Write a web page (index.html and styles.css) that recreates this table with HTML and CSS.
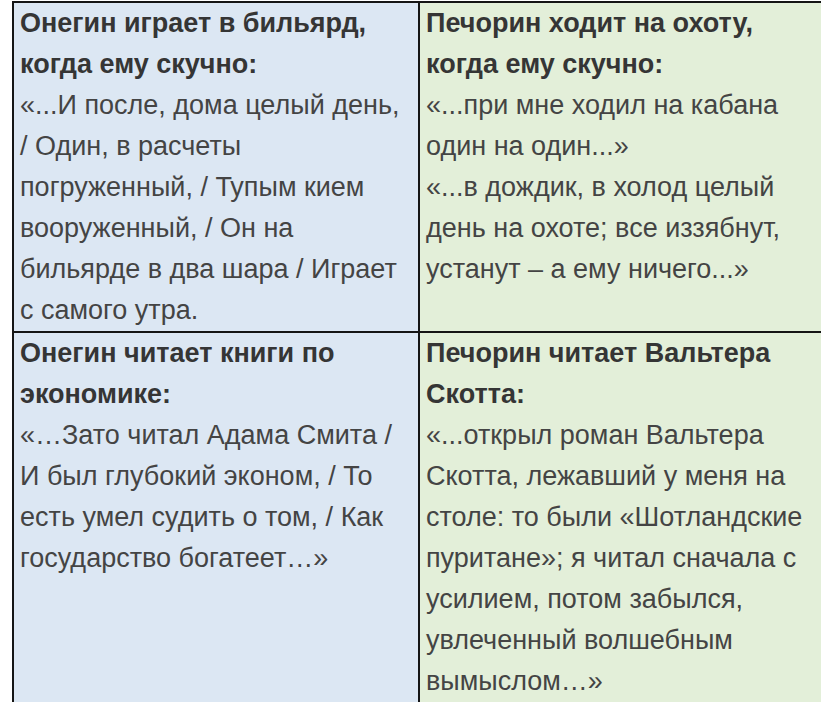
FILE: index.html
```html
<!DOCTYPE html>
<html lang="ru">
<head>
<meta charset="utf-8">
<link rel="stylesheet" href="styles.css">
</head>
<body>
<table class="cmp">
  <tr>
    <td class="col-a">
      <p class="head">Онегин играет в бильярд,<br>когда ему скучно:</p>
      <p class="quote">«...И после, дома целый день,<br>/ Один, в расчеты<br>погруженный, / Тупым кием<br>вооруженный, / Он на<br>бильярде в два шара / Играет<br>с самого утра.</p>
    </td>
    <td class="col-b">
      <p class="head">Печорин ходит на охоту,<br>когда ему скучно:</p>
      <p class="quote">«...при мне ходил на кабана<br>один на один...»</p>
      <p class="quote">«...в дождик, в холод целый<br>день на охоте; все иззябнут,<br>устанут – а ему ничего...»</p>
    </td>
  </tr>
  <tr>
    <td class="col-a">
      <p class="head">Онегин читает книги по<br>экономике:</p>
      <p class="quote">«…Зато читал Адама Смита /<br>И был глубокий эконом, / То<br>есть умел судить о том, / Как<br>государство богатеет…»</p>
    </td>
    <td class="col-b">
      <p class="head">Печорин читает Вальтера<br>Скотта:</p>
      <p class="quote">«...открыл роман Вальтера<br>Скотта, лежавший у меня на<br>столе: то были «Шотландские<br>пуритане»; я читал сначала с<br>усилием, потом забылся,<br>увлеченный волшебным<br>вымыслом…»</p>
    </td>
  </tr>
</table>
</body>
</html>
```

FILE: styles.css
```css
html, body {
  margin: 0;
  padding: 0;
  background: #ffffff;
}
body {
  padding: 1px 0 0 12px;
  font-family: "Liberation Sans", Arial, sans-serif;
  overflow: hidden;
}
.cmp {
  border-collapse: collapse;
  table-layout: fixed;
  width: 822px;
}
.cmp td {
  border: 2px solid #151515;
  vertical-align: top;
  padding: 0 6px;
  font-size: 27px;
  line-height: 41px;
  color: #444444;
  white-space: nowrap;
}
.cmp tr:last-child td {
  border-bottom-color: #8a8f94;
}
.col-a {
  width: 392px;
  background: #dce7f3;
}
.col-b {
  background: #e3efd9;
}
.cmp p {
  margin: 0;
}
.head {
  font-weight: bold;
  color: #353535;
}
```
